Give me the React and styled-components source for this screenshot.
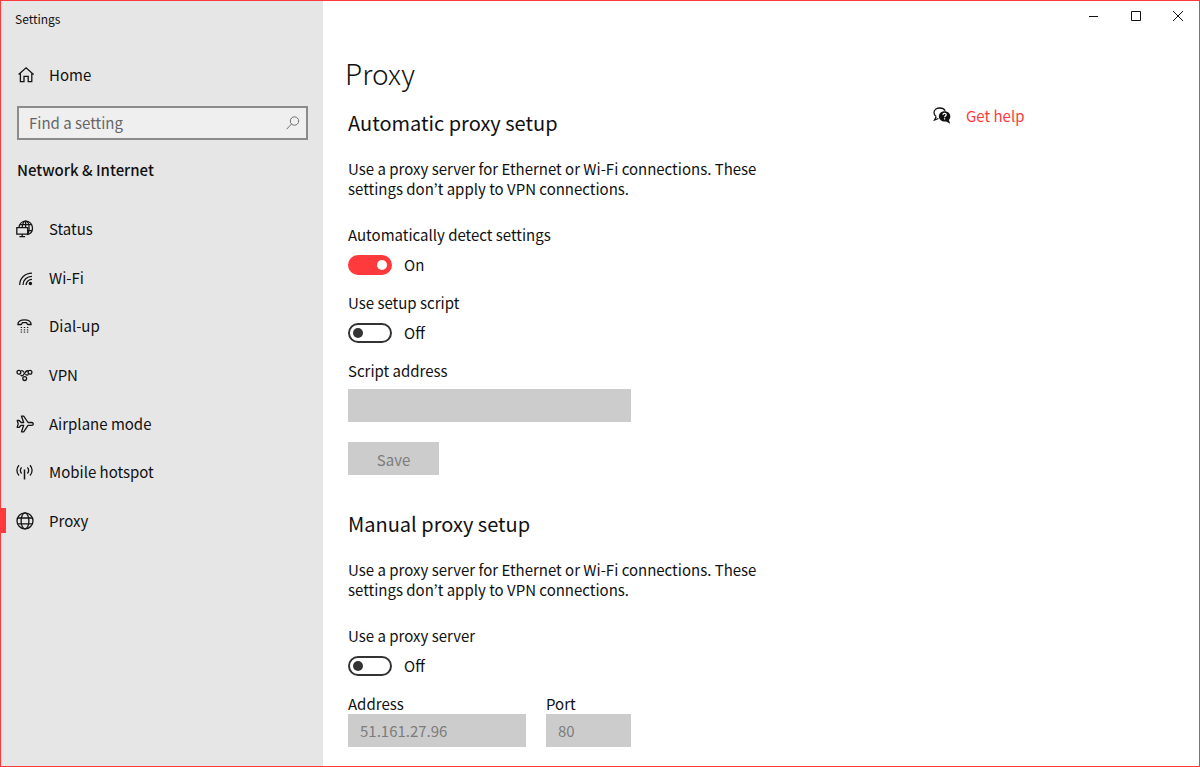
import React, { useState } from "react";
import styled, { createGlobalStyle } from "styled-components";

const accent = "#ff3a3d";

const GlobalStyle = createGlobalStyle`
  * {
    box-sizing: border-box;
  }
  body {
    margin: 0;
    background: #fff;
    color: #111;
    font-family: "Noto Sans CJK KR", "Open Sans", sans-serif;
    font-size: 15px;
    line-height: 20px;
  }
  button,
  input {
    font: inherit;
    color: inherit;
  }
`;

const Window = styled.div`
  display: flex;
  min-height: 100vh;
  border: 1px solid ${accent};
`;

const Sidebar = styled.aside`
  flex: 0 0 322px;
  background: #e6e6e6;
`;

const AppTitle = styled.div`
  padding: 8px 14px 0;
  font-size: 12px;
`;

const NavLink = styled.a`
  display: flex;
  align-items: center;
  gap: 15px;
  padding-left: 10px;
  border-left: 5px solid ${(props) => (props.$active ? accent : "transparent")};
  border-image: ${(props) =>
    props.$active
      ? `linear-gradient(transparent 25%, ${accent} 25% 75%, transparent 75%) 1`
      : "none"};
  color: inherit;
  text-decoration: none;

  svg {
    flex: none;
  }
`;

const HomeLink = styled(NavLink)`
  height: 48px;
  margin-top: 22px;
`;

const SearchBox = styled.label`
  display: flex;
  align-items: center;
  height: 34px;
  margin: 7px 15px 0 16px;
  padding: 0 6px 0 10px;
  border: 2px solid #8b8b8b;
  background: #efefef;

  input {
    flex: 1;
    min-width: 0;
    padding: 0;
    border: 0;
    outline: 0;
    background: none;
  }
  input::placeholder {
    color: #666;
    opacity: 1;
  }
`;

const Category = styled.h2`
  margin: 20px 16px 25px;
  font-size: 15px;
  font-weight: 500;
  line-height: 20px;
`;

const Nav = styled.nav`
  display: grid;
  grid-auto-rows: 1fr;
  height: 340px;
`;

const Main = styled.main`
  flex: 1;
  min-width: 0;
`;

const TitleBar = styled.div`
  display: flex;
  justify-content: flex-end;
  height: 30px;
`;

const WindowButton = styled.button`
  display: flex;
  align-items: center;
  justify-content: center;
  width: 42px;
  padding: 0;
  border: 0;
  background: none;
`;

const PageTitle = styled.h1`
  margin: 22px 0 0 22px;
  font-size: 28px;
  font-weight: 300;
  line-height: 40px;
`;

const Columns = styled.div`
  display: grid;
  grid-template-columns: minmax(0, 585px) 1fr;
  padding: 13px 25px 19px;
`;

const Content = styled.div`
  padding-top: 3px;
`;

const Section = styled.section`
  & + & {
    margin-top: 35px;
  }
`;

const SectionTitle = styled.h2`
  margin: 0;
  font-size: 20px;
  font-weight: 400;
  line-height: 28px;
`;

const Description = styled.p`
  max-width: 420px;
  margin: 22px 0 26px;
`;

const Setting = styled.div`
  margin-bottom: 18px;
`;

const Label = styled.label`
  display: block;
`;

const SwitchRow = styled.div`
  display: flex;
  align-items: center;
  gap: 12px;
  margin-top: 10px;
`;

const Switch = styled.input.attrs({ type: "checkbox", role: "switch" })`
  appearance: none;
  display: flex;
  align-items: center;
  width: 44px;
  height: 20px;
  margin: 0;
  padding: 0 3px;
  border: 2px solid #333;
  border-radius: 10px;

  &::before {
    content: "";
    width: 10px;
    height: 10px;
    border-radius: 50%;
    background: #333;
  }
  &:checked {
    justify-content: flex-end;
    border-color: ${accent};
    background: ${accent};
  }
  &:checked::before {
    background: #fff;
  }
`;

const TextField = styled.input`
  display: block;
  width: 100%;
  height: 33px;
  margin-top: ${(props) => (props.$spaced ? "8px" : "0")};
  padding: 0 12px;
  border: 0;
  background: #ccc;
  color: #7c7c7c;
`;

const ScriptForm = styled.div`
  max-width: 283px;
`;

const SaveButton = styled.button`
  width: 91px;
  height: 33px;
  margin-top: 20px;
  padding: 2px 0 0;
  border: 0;
  background: #ccc;
  color: #7c7c7c;
`;

const ServerForm = styled.div`
  display: grid;
  grid-template-columns: 178px 85px;
  gap: 20px;
`;

const HelpLink = styled.a`
  display: flex;
  align-items: center;
  align-self: start;
  gap: 15px;
  color: ${accent};
  text-decoration: none;
`;

function Icon({ size = 18, children }) {
  return (
    <svg
      width={size}
      height={size}
      viewBox="0 0 18 18"
      fill="none"
      stroke="#151515"
      strokeWidth="1.3"
      aria-hidden="true"
    >
      {children}
    </svg>
  );
}

const icons = {
  home: (
    <path d="M2.600 8.600 10.100 1.800 17.600 8.600M4.400 7.400v8.300h3.600v-5.400h4.200v5.400h3.600V7.400" />
  ),
  status: (
    <>
      <path d="M3 7.300C3.400 3.700 6.100 1.100 9.600 1.100c4 0 6.900 3.100 6.900 6.800 0 3.500-2.300 6-5.200 6.700" />
      <path d="M6.200 7.300c.3-3.600 1.700-6.200 3.400-6.200 2 0 3.500 3.100 3.500 6.800 0 2.900-.8 5.400-2 6.400M4 4.700h11.700M9.600 1.100v6.200M11.900 10.600h4" />
      <path d="M.8 7.600h10.900v6.500H.8zM6.200 14.100v2.400M3.400 16.700h5.700" />
    </>
  ),
  wifi: (
    <>
      <path d="M3.700 16C3.700 9.200 9 4.200 16 4.200M7 16c0-5 3.900-8.700 9-8.700M10.200 16c0-3.300 2.500-5.700 5.800-5.700" />
      <circle cx="14.400" cy="14.500" r="1.700" fill="#151515" stroke="none" />
    </>
  ),
  dialup: (
    <>
      <path d="M1.900 7.500C1.700 4.400 4.600 2.800 8.500 2.800s6.800 1.600 6.600 4.700h-3.400c-.5 0-.8-1.900-1.200-1.900h-4c-.4 0-.7 1.900-1.200 1.900z" />
      <path
        d="M4.700 10.500h1.400M7.800 10.500h1.400M10.900 10.500h1.400M4.700 12.900h1.400M7.800 12.900h1.400M10.900 12.900h1.400M4.700 15.100h1.400M7.800 15.100h1.400M10.900 15.100h1.400"
        strokeWidth="1"
      />
    </>
  ),
  vpn: (
    <>
      <circle cx="2.900" cy="6.200" r="1.900" />
      <circle cx="14" cy="6.200" r="1.900" />
      <circle cx="8.700" cy="12.600" r="1.900" />
      <path d="M5.200 4.600c1.300-.3 2 .5 2.800 1.700M12.400 4.900c-1.600-.6-2.500.3-3.500 1.900L7.200 9.200c-.7.900-1.700.8-2.500-.2M9.400 8.200c1 1 1.900 1.300 3 .4" />
    </>
  ),
  airplane: (
    <path
      d="M1.200 5.500h2l2 2h2.500L5.500 1.200h2.200l4.300 6.300h3.500c1.200 0 1.800.6 1.800 1.400s-.6 1.400-1.800 1.400H12l-4.300 6.500H5.500l2.200-6.500H5.200l-2 2h-2L2.200 8.900z"
      strokeLinejoin="round"
    />
  ),
  hotspot: (
    <>
      <path d="M3 2.200C.2 5.200.2 9.500 3 12.500M5.600 4.300c-1.600 2-1.600 4.200 0 6.200M14 2.200c2.800 3 2.800 7.300 0 10.300M11.400 4.300c1.600 2 1.600 4.200 0 6.200" />
      <path d="M8.500 6.500v10" strokeWidth="1.500" />
    </>
  ),
  proxy: (
    <>
      <circle cx="9" cy="8.900" r="8" />
      <ellipse cx="9" cy="8.900" rx="3.900" ry="8" />
      <path d="M1.700 6h14.600M1.700 11.800h14.600" />
    </>
  ),
};

const navItems = [
  { id: "status", text: "Status" },
  { id: "wifi", text: "Wi-Fi" },
  { id: "dialup", text: "Dial-up" },
  { id: "vpn", text: "VPN" },
  { id: "airplane", text: "Airplane mode" },
  { id: "hotspot", text: "Mobile hotspot" },
  { id: "proxy", text: "Proxy" },
];

function SwitchSetting({ id, label, defaultOn = false }) {
  const [on, setOn] = useState(defaultOn);
  return (
    <Setting>
      <Label htmlFor={id}>{label}</Label>
      <SwitchRow>
        <Switch id={id} checked={on} onChange={() => setOn(!on)} />
        <span>{on ? "On" : "Off"}</span>
      </SwitchRow>
    </Setting>
  );
}

function ProxyDescription() {
  return (
    <Description>
      Use a proxy server for Ethernet or Wi-Fi connections. These settings
      don’t apply to VPN connections.
    </Description>
  );
}

function App() {
  return (
    <Window>
      <GlobalStyle />
      <Sidebar>
        <AppTitle>Settings</AppTitle>
        <HomeLink href="#home">
          <Icon>{icons.home}</Icon>
          Home
        </HomeLink>
        <SearchBox>
          <input type="text" placeholder="Find a setting" aria-label="Find a setting" />
          <svg width="14" height="14" viewBox="0 0 14 14" fill="none" stroke="#707070" aria-hidden="true">
            <circle cx="8.500" cy="5" r="4.200" />
            <path d="M5.500 8 .6 13.200" />
          </svg>
        </SearchBox>
        <Category>Network &amp; Internet</Category>
        <Nav>
          {navItems.map((item) => (
            <NavLink key={item.id} href={`#${item.id}`} $active={item.id === "proxy"}>
              <Icon>{icons[item.id]}</Icon>
              {item.text}
            </NavLink>
          ))}
        </Nav>
      </Sidebar>
      <Main>
        <TitleBar>
          <WindowButton aria-label="Minimize">
            <svg width="10" height="10" stroke="#111">
              <path d="M0 5.500h9" />
            </svg>
          </WindowButton>
          <WindowButton aria-label="Maximize">
            <svg width="10" height="10" fill="none" stroke="#111">
              <path d="M.5.5h9v9h-9z" />
            </svg>
          </WindowButton>
          <WindowButton aria-label="Close">
            <svg width="10" height="10" stroke="#111">
              <path d="m0 0 10 10M10 0 0 10" />
            </svg>
          </WindowButton>
        </TitleBar>
        <PageTitle>Proxy</PageTitle>
        <Columns>
          <Content>
            <Section>
              <SectionTitle>Automatic proxy setup</SectionTitle>
              <ProxyDescription />
              <SwitchSetting id="detect" label="Automatically detect settings" defaultOn />
              <SwitchSetting id="script" label="Use setup script" />
              <ScriptForm>
                <Label htmlFor="script-address">Script address</Label>
                <TextField id="script-address" type="text" $spaced disabled />
                <SaveButton disabled>Save</SaveButton>
              </ScriptForm>
            </Section>
            <Section>
              <SectionTitle>Manual proxy setup</SectionTitle>
              <ProxyDescription />
              <SwitchSetting id="server" label="Use a proxy server" />
              <ServerForm>
                <div>
                  <Label htmlFor="address">Address</Label>
                  <TextField id="address" type="text" defaultValue="51.161.27.96" disabled />
                </div>
                <div>
                  <Label htmlFor="port">Port</Label>
                  <TextField id="port" type="text" defaultValue="80" disabled />
                </div>
              </ServerForm>
            </Section>
          </Content>
          <HelpLink href="#help">
            <Icon>
              <path d="M3.200 9.600C1.800 8.500 1 7.200 1 5.700 1 3 3.600 1 6.800 1c2.600 0 4.500 1 5.300 2.700M3.200 9.600 1.500 13.100l4-1.600" />
              <path
                d="M11.600 4.200c3.300 0 5.700 2.200 5.700 5 0 1.700-.6 2.800-1.500 3.700l1.500 3.900-4.200-2.300c-4 .6-7.200-1.800-7.200-5.300 0-2.800 2.400-5 5.700-5z"
                fill="#111"
                stroke="none"
              />
              <path d="M9.900 7.900c.1-2.200 3.500-2 3.300 0-.1 1.100-1.500 1.100-1.600 2.400M11.600 11.300v1.200" stroke="#fff" strokeWidth="1.200" />
            </Icon>
            Get help
          </HelpLink>
        </Columns>
      </Main>
    </Window>
  );
}

export default App;
